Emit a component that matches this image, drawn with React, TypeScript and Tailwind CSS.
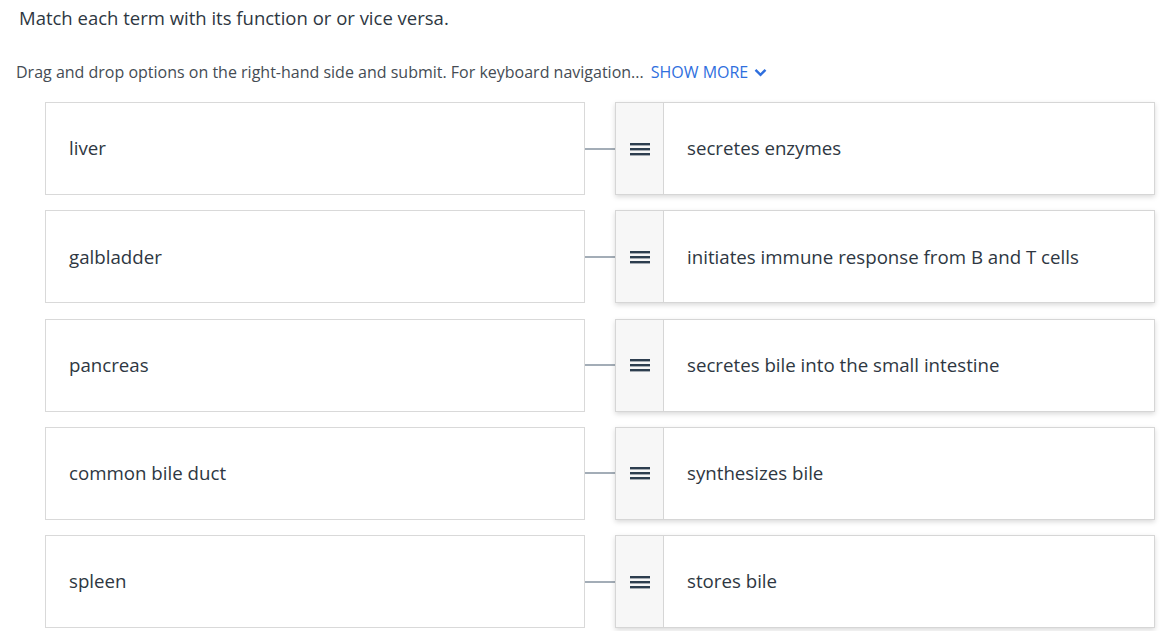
const pairs = [
  { term: "liver", fn: "secretes enzymes" },
  { term: "galbladder", fn: "initiates immune response from B and T cells" },
  { term: "pancreas", fn: "secretes bile into the small intestine" },
  { term: "common bile duct", fn: "synthesizes bile" },
  { term: "spleen", fn: "stores bile" },
];

const Handle = () => (
  <svg width="20" height="14" viewBox="0 0 20 14" className="text-[#2d3e4f]">
    <rect x="0" y="1" width="20" height="2.4" fill="currentColor" />
    <rect x="0" y="6" width="20" height="2.4" fill="currentColor" />
    <rect x="0" y="11" width="20" height="2.4" fill="currentColor" />
  </svg>
);

export default function App() {
  return (
    <div className="min-h-screen bg-white font-['Open_Sans',sans-serif] text-[#333]">
      <p className="pl-[19px] pt-[6px] text-[18.5px] leading-[24px] text-[#2e3742]">
        Match each term with its function or or vice versa.
      </p>

      <div className="mt-[30px] flex items-center pl-[16px] text-[16px] leading-[24px] text-[#454c54]">
        <span>Drag and drop options on the right-hand side and submit. For keyboard navigation...</span>
        <button className="ml-[7px] flex items-center gap-[6px] text-[#2f6fde]">
          SHOW MORE
          <svg width="13" height="9" viewBox="0 0 13 9">
            <path d="M1.5 1.8 L6.5 6.8 L11.5 1.8" fill="none" stroke="currentColor" strokeWidth="2.4" />
          </svg>
        </button>
      </div>

      <div className="mt-[18px] flex flex-col gap-[15.25px] pl-[45px]">
        {pairs.map((p) => (
          <div key={p.term} className="flex items-center">
            <div className="flex h-[93px] w-[540px] items-center border border-[#d9d9d9] pl-[23px] text-[18.7px] text-[#2e3742]">
              {p.term}
            </div>
            <div className="h-[2px] w-[30px] bg-[#a3adb7]" />
            <div className="flex h-[93px] w-[540px] border border-[#d6d6d6] bg-white shadow-[0_2px_5px_rgba(0,0,0,0.15)]">
              <div className="flex w-[48px] items-center justify-center border-r border-[#d6d6d6] bg-[#f7f7f7]">
                <Handle />
              </div>
              <div className="flex items-center pl-[23px] text-[18.7px] text-[#2e3742]">{p.fn}</div>
            </div>
          </div>
        ))}
      </div>
    </div>
  );
}
